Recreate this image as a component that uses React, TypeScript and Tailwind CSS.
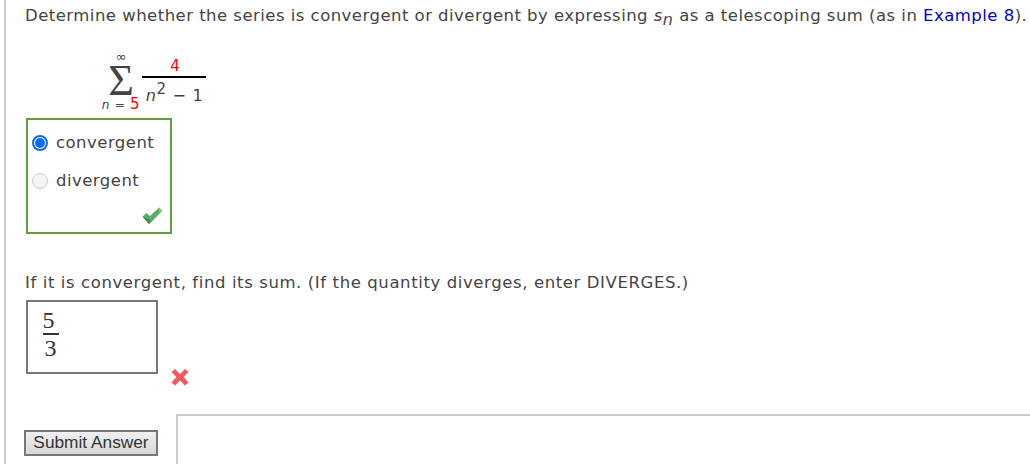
import * as React from "react";

const Check = () => (
  <svg width="21" height="17" viewBox="0 0 21 17">
    <path d="M0.5 9.5 L4.5 6 L8 9 L17 0.5 L20.5 3.5 L8 16.5 L6.5 16.5 Z" fill="#5cae66" />
    <path d="M17 0.5 L20.5 3.5 L17.5 5 Z" fill="#8ccf90" />
    <path d="M0.5 9.5 L6.5 16.5 L8 16.5 L8 13 Z" fill="#3f8f50" />
  </svg>
);

const Cross = () => (
  <svg width="20" height="20" viewBox="0 0 20 20">
    <path d="M5 2 L10 7 L15 2 L18.5 5 L13.5 10 L18.5 15.5 L15 18.5 L10 13.5 L5 18.5 L1.5 15.5 L6.5 10 L1.5 5 Z" fill="#f4585f" />
  </svg>
);

const Series = () => (
  <div className="flex items-start ml-[73px] mt-[22px] h-[68px] text-[#444] tracking-normal">
    <div className="flex flex-col items-center w-[46px]">
      <span className="text-[13px] leading-[10px] mt-[2px]">∞</span>
      <span className="text-[44px] leading-[34px] mt-[2px] font-['Liberation_Serif',serif] font-light">Σ</span>
      <span className="text-[12px] leading-[16px] -mt-[2px] whitespace-nowrap tracking-[0.7px]">
        <i>n</i> = <span className="text-[#f00] text-[15px]">5</span>
      </span>
    </div>
    <div className="flex flex-col items-center w-[64px] mt-[6px] -ml-[2px]">
      <span className="text-[#f00] text-[15px] leading-[20px] border-b-2 border-black w-full text-center pl-[2px]">4</span>
      <span className="text-[16px] leading-[18px] whitespace-nowrap mt-[9px] tracking-[0.7px] pl-[1px]">
        <i>n</i><sup className="text-[15px] -top-[7px]">2</sup> − 1
      </span>
    </div>
  </div>
);

export default function App() {
  return (
    <div className="w-[1030px] h-[464px] overflow-hidden bg-white font-['DejaVu_Sans',sans-serif] text-[16.5px] tracking-[0.47px] text-[#444]">
      <div className="ml-[4px] h-full border-l-2 border-[#ccc] pl-[19px]">
        <p className="pt-[4px] leading-[24px] whitespace-nowrap">
          Determine whether the series is convergent or divergent by expressing <i>s<sub className="text-[16px]">n</sub></i> as a telescoping sum (as in <span className="text-[#0000d0]">Example 8</span>).
        </p>

        <Series />

        <div className="ml-[1px] w-[146px] h-[116px] border-2 border-[#5c9f3c] relative">
          <div className="flex items-center h-[38px] pl-[4px] gap-[8px] mt-[4px]">
            <span className="w-[16px] h-[16px] rounded-full border-2 border-[#0a6cf5] bg-white flex items-center justify-center">
              <span className="w-[10px] h-[10px] rounded-full bg-[#0a6cf5]" />
            </span>
            <span>convergent</span>
          </div>
          <div className="flex items-center h-[38px] pl-[4px] gap-[8px]">
            <span className="w-[16px] h-[16px] rounded-full border border-[#ccc] bg-[#f4f4f4]" />
            <span>divergent</span>
          </div>
          <div className="absolute right-[7px] bottom-[8px]">
            <Check />
          </div>
        </div>

        <p className="mt-[37px] leading-[24px] whitespace-nowrap tracking-[0.6px]">
          If it is convergent, find its sum. (If the quantity diverges, enter DIVERGES.)
        </p>

        <div className="flex items-end mt-[5px] ml-[1px]">
          <div className="w-[132px] h-[74px] border-2 border-[#777] pl-[15px] pt-[6px]">
            <div className="inline-flex flex-col items-center font-['Liberation_Serif',serif] text-[24px] tracking-normal text-[#333]">
              <span className="leading-[25px] -ml-[5px]">5</span>
              <span className="w-[16px] border-t-2 border-[#333]" />
              <span className="leading-[27px] -ml-[1px]">3</span>
            </div>
          </div>
          <div className="ml-[12px] -mb-[13px]">
            <Cross />
          </div>
        </div>

        <div className="flex items-end mt-[40px]">
          <button className="-ml-[1px] w-[134px] h-[26px] pb-[2px] border-2 border-[#777] bg-gradient-to-b from-[#f0f0f0] to-[#d8d8d8] font-['Liberation_Sans',sans-serif] text-[17.3px] tracking-normal leading-[20px] text-[#333] mb-[18px]">
            Submit Answer
          </button>
          <div className="ml-[18px] flex-1 h-[60px] border-l-2 border-t-2 border-[#ccc]" />
        </div>
      </div>
    </div>
  );
}
